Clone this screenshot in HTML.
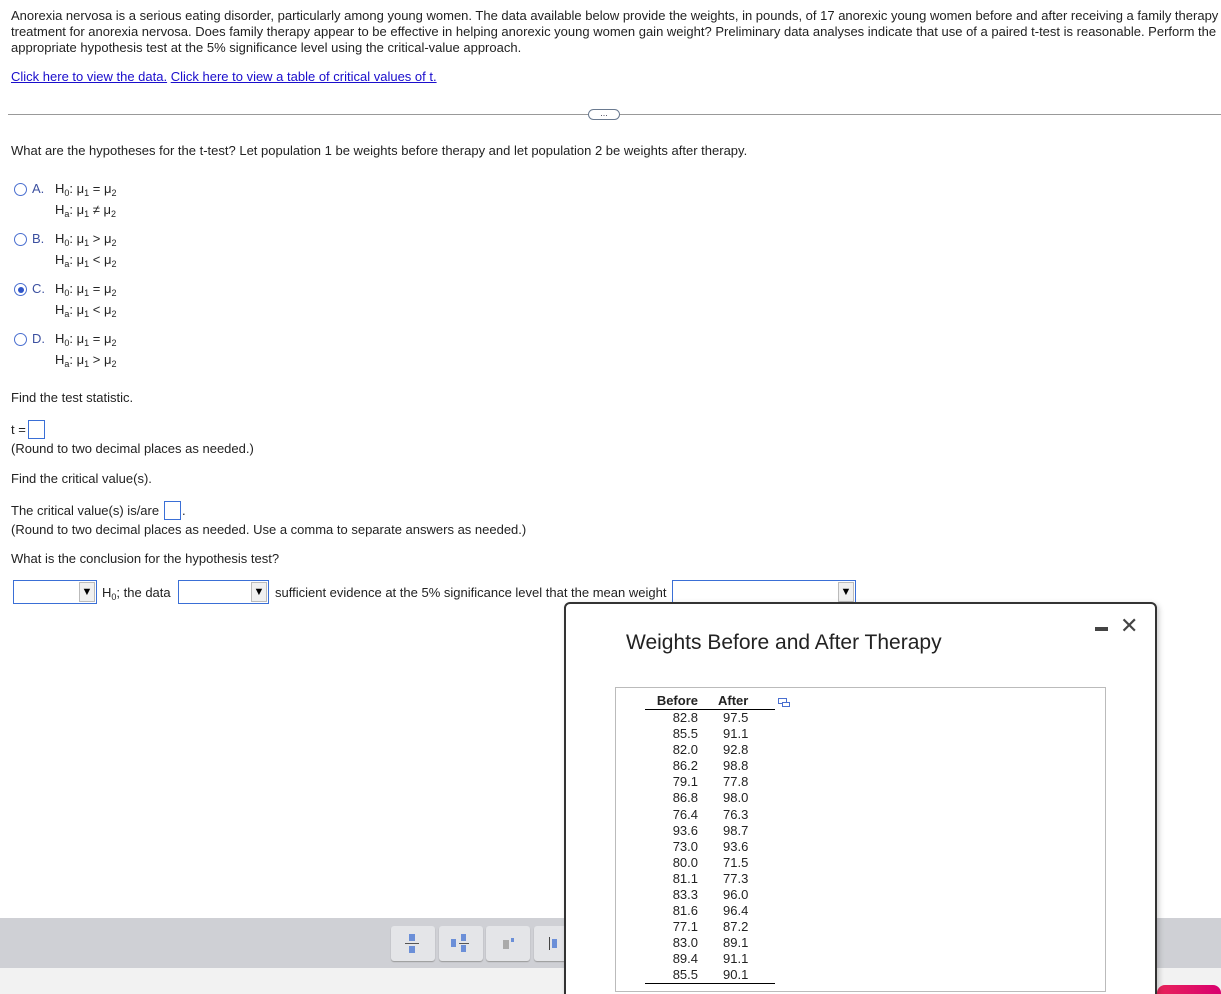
<!DOCTYPE html>
<html><head><meta charset="utf-8"><style>
*{margin:0;padding:0;box-sizing:border-box}
html,body{width:1221px;height:994px;overflow:hidden}
body{background:#fff;font-family:"Liberation Sans",Arial,sans-serif;font-size:13px;color:#222}
#w{position:relative;width:1221px;height:994px;overflow:hidden}
.a{position:absolute;white-space:nowrap}
a{color:#1a0dcc;text-decoration:underline}
.rad{position:absolute;width:13px;height:13px;border:1px solid #4a6fd0;border-radius:50%}
.rad.on::after{content:"";position:absolute;left:2.5px;top:2.5px;width:6px;height:6px;border-radius:50%;background:#2f55c8}
.lab{color:#3c50a0}
sub{font-size:9px;vertical-align:-3px}
.box{position:absolute;border:1px solid #3a6fd6;background:#fff}
.dd{position:absolute;border:1px solid #3a6fd6;height:24px;background:#fff}
.dd span{position:absolute;right:1px;top:1px;width:16px;height:20px;background:#f0f0f0;border:1px solid #bbb;font-size:11px;text-align:center;line-height:18px;color:#000}
.btn{position:absolute;top:926px;width:44px;height:35px;background:#e4e5e8;border-radius:3px;box-shadow:0 1px 1px #999}
td{padding:0;height:16.1px;line-height:16px}
</style></head><body><div id="w">
<div class="a" style="left:11px;top:8px;line-height:16px">Anorexia nervosa is a serious eating disorder, particularly among young women. The data available below provide the weights, in pounds, of 17 anorexic young women before and after receiving a family therapy<br>treatment for anorexia nervosa. Does family therapy appear to be effective in helping anorexic young women gain weight? Preliminary data analyses indicate that use of a paired t-test is reasonable. Perform the<br>appropriate hypothesis test at the 5% significance level using the critical-value approach.</div>
<div class="a" style="left:11px;top:69px"><a>Click here to view the data.</a> <a>Click here to view a table of critical values of t.</a></div>
<div class="a" style="left:8px;top:114px;width:1213px;height:1px;background:#999"></div>
<div class="a" style="left:588px;top:109px;width:32px;height:11px;border:1px solid #6a7a90;border-radius:6px;background:#fff;font-size:9px;line-height:6px;text-align:center;color:#445">...</div>
<div class="a" style="left:11px;top:143px">What are the hypotheses for the t-test? Let population 1 be weights before therapy and let population 2 be weights after therapy.</div>

<div class="rad" style="left:14px;top:183px"></div><div class="a lab" style="left:32px;top:181px">A.</div>
<div class="a" style="left:55px;top:181px">H<sub>0</sub>: μ<sub>1</sub> = μ<sub>2</sub></div><div class="a" style="left:55px;top:202px">H<sub>a</sub>: μ<sub>1</sub> ≠ μ<sub>2</sub></div>
<div class="rad" style="left:14px;top:233px"></div><div class="a lab" style="left:32px;top:231px">B.</div>
<div class="a" style="left:55px;top:231px">H<sub>0</sub>: μ<sub>1</sub> &gt; μ<sub>2</sub></div><div class="a" style="left:55px;top:252px">H<sub>a</sub>: μ<sub>1</sub> &lt; μ<sub>2</sub></div>
<div class="rad on" style="left:14px;top:283px"></div><div class="a lab" style="left:32px;top:281px">C.</div>
<div class="a" style="left:55px;top:281px">H<sub>0</sub>: μ<sub>1</sub> = μ<sub>2</sub></div><div class="a" style="left:55px;top:302px">H<sub>a</sub>: μ<sub>1</sub> &lt; μ<sub>2</sub></div>
<div class="rad" style="left:14px;top:333px"></div><div class="a lab" style="left:32px;top:331px">D.</div>
<div class="a" style="left:55px;top:331px">H<sub>0</sub>: μ<sub>1</sub> = μ<sub>2</sub></div><div class="a" style="left:55px;top:352px">H<sub>a</sub>: μ<sub>1</sub> &gt; μ<sub>2</sub></div>

<div class="a" style="left:11px;top:390px">Find the test statistic.</div>
<div class="a" style="left:11px;top:422px">t =</div><div class="box" style="left:28px;top:420px;width:17px;height:19px"></div>
<div class="a" style="left:11px;top:441px">(Round to two decimal places as needed.)</div>
<div class="a" style="left:11px;top:471px">Find the critical value(s).</div>
<div class="a" style="left:11px;top:503px">The critical value(s) is/are</div><div class="box" style="left:164px;top:501px;width:17px;height:19px"></div><div class="a" style="left:182px;top:503px">.</div>
<div class="a" style="left:11px;top:522px">(Round to two decimal places as needed. Use a comma to separate answers as needed.)</div>
<div class="a" style="left:11px;top:551px">What is the conclusion for the hypothesis test?</div>
<div class="dd" style="left:13px;top:580px;width:84px"><span>▼</span></div>
<div class="a" style="left:102px;top:585px">H<sub>0</sub>; the data</div>
<div class="dd" style="left:178px;top:580px;width:91px"><span>▼</span></div>
<div class="a" style="left:275px;top:585px">sufficient evidence at the 5% significance level that the mean weight</div>
<div class="dd" style="left:672px;top:580px;width:184px"><span>▼</span></div>

<div class="a" style="left:0;top:918px;width:1221px;height:50px;background:#cfd0d5"></div>
<div class="a" style="left:0;top:968px;width:1221px;height:26px;background:#f2f2f2"></div>
<div class="btn" style="left:391px"><div class="a" style="left:18px;top:8px;width:6px;height:7px;background:#6b8fd8"></div><div class="a" style="left:14px;top:17px;width:14px;height:1px;background:#555"></div><div class="a" style="left:18px;top:20px;width:6px;height:7px;background:#6b8fd8"></div></div>
<div class="btn" style="left:439px"><div class="a" style="left:12px;top:13px;width:5px;height:8px;background:#6b8fd8"></div><div class="a" style="left:22px;top:8px;width:5px;height:7px;background:#6b8fd8"></div><div class="a" style="left:20px;top:17px;width:10px;height:1px;background:#555"></div><div class="a" style="left:22px;top:19px;width:5px;height:7px;background:#6b8fd8"></div></div>
<div class="btn" style="left:486px"><div class="a" style="left:17px;top:14px;width:6px;height:9px;background:#aaa"></div><div class="a" style="left:25px;top:12px;width:3px;height:4px;background:#6b8fd8"></div></div>
<div class="btn" style="left:534px"><div class="a" style="left:15px;top:11px;width:1px;height:13px;background:#444"></div><div class="a" style="left:18px;top:13px;width:5px;height:9px;background:#6b8fd8"></div></div>
<div class="a" style="left:1157px;top:985px;width:64px;height:12px;border-radius:8px 8px 0 0;background:linear-gradient(90deg,#e8245a,#d9006f)"></div>

<div class="a" style="left:564px;top:602px;width:593px;height:420px;background:#fff;border:2px solid #333;border-radius:6px;box-shadow:2px 2px 6px rgba(0,0,0,.2)">
<div class="a" style="left:60px;top:27px;font-size:21px;color:#222">Weights Before and After Therapy</div>
<div class="a" style="left:529px;top:23px;width:13px;height:4px;background:#444"></div>
<div class="a" style="left:554px;top:11px;font-size:22px;color:#444;line-height:22px">✕</div>
<div class="a" style="left:49px;top:83px;width:491px;height:305px;border:1px solid #bbb"></div>
<div class="a" style="left:212px;top:94px;width:9px;height:6px;border:1px solid #4a6fd0"></div>
<div class="a" style="left:216px;top:98px;width:8px;height:5px;border:1px solid #4a6fd0;background:#fff"></div>
<table class="a" style="left:79px;top:89px;border-collapse:collapse;font-size:13px;color:#222">
<tr><td style="width:53px;text-align:right;font-weight:bold;border-bottom:1px solid #000">Before</td><td style="width:77px;text-align:left;font-weight:bold;border-bottom:1px solid #000;padding-left:20px">After</td></tr>
<tr><td style="text-align:right">82.8</td><td style="padding-left:25px">97.5</td></tr>
<tr><td style="text-align:right">85.5</td><td style="padding-left:25px">91.1</td></tr>
<tr><td style="text-align:right">82.0</td><td style="padding-left:25px">92.8</td></tr>
<tr><td style="text-align:right">86.2</td><td style="padding-left:25px">98.8</td></tr>
<tr><td style="text-align:right">79.1</td><td style="padding-left:25px">77.8</td></tr>
<tr><td style="text-align:right">86.8</td><td style="padding-left:25px">98.0</td></tr>
<tr><td style="text-align:right">76.4</td><td style="padding-left:25px">76.3</td></tr>
<tr><td style="text-align:right">93.6</td><td style="padding-left:25px">98.7</td></tr>
<tr><td style="text-align:right">73.0</td><td style="padding-left:25px">93.6</td></tr>
<tr><td style="text-align:right">80.0</td><td style="padding-left:25px">71.5</td></tr>
<tr><td style="text-align:right">81.1</td><td style="padding-left:25px">77.3</td></tr>
<tr><td style="text-align:right">83.3</td><td style="padding-left:25px">96.0</td></tr>
<tr><td style="text-align:right">81.6</td><td style="padding-left:25px">96.4</td></tr>
<tr><td style="text-align:right">77.1</td><td style="padding-left:25px">87.2</td></tr>
<tr><td style="text-align:right">83.0</td><td style="padding-left:25px">89.1</td></tr>
<tr><td style="text-align:right">89.4</td><td style="padding-left:25px">91.1</td></tr>
<tr><td style="text-align:right;border-bottom:1px solid #000">85.5</td><td style="padding-left:25px;border-bottom:1px solid #000">90.1</td></tr>
</table>
</div>
</div></body></html>
